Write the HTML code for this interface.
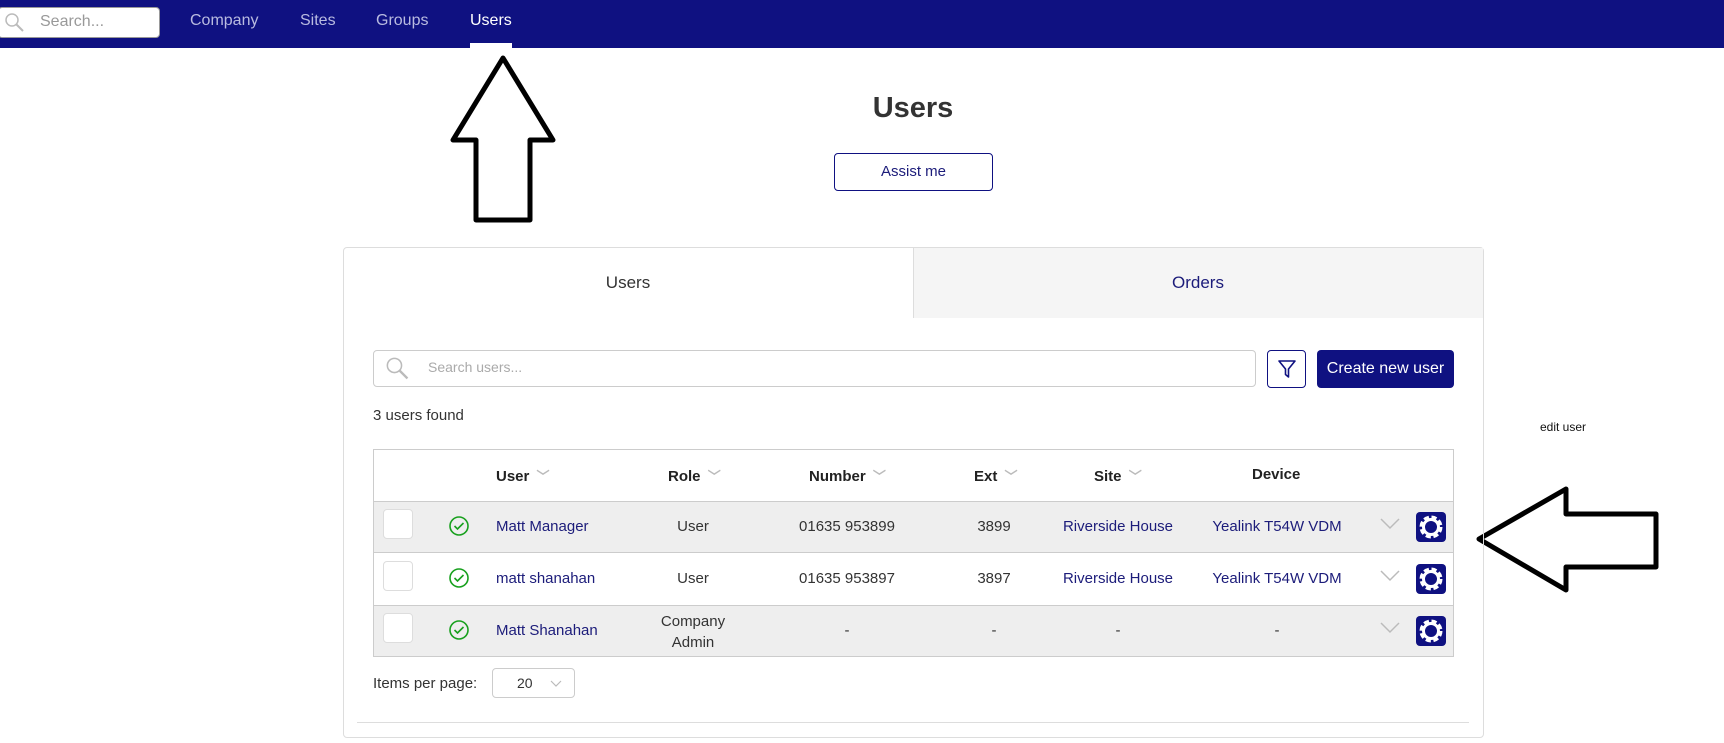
<!DOCTYPE html>
<html><head><meta charset="utf-8"><style>
*{box-sizing:border-box;margin:0;padding:0}
body{width:1724px;height:743px;background:#fff;font-family:"Liberation Sans",sans-serif;position:relative;overflow:hidden;color:#333}
.a{position:absolute}
.nav{left:0;top:0;width:1724px;height:48px;background:#0f1181}
.nl{top:12px;font-size:16px;color:#b9bbe0}
.t{font-size:15px;white-space:nowrap}
.hd{font-weight:bold;font-size:15px;color:#222}
.lk{color:#1c1c7a}
.cb{width:30px;height:30px;background:#fff;border:1px solid #ddd;border-radius:4px}
.chev{color:#bbb;font-size:13px;margin-left:3px}
</style></head><body>
<div class="a nav"></div>
<div class="a" style="left:-2px;top:7px;width:162px;height:31px;background:#fff;border:1px solid #999;border-radius:4px"></div>
<svg class="a" style="left:4px;top:12px" width="22" height="22" viewBox="0 0 22 22"><circle cx="8" cy="8" r="6" fill="none" stroke="#bbb" stroke-width="1.5"/><line x1="12.5" y1="12.5" x2="19" y2="19" stroke="#bbb" stroke-width="2"/></svg>
<div class="a t" style="left:40px;top:13px;font-size:16px;color:#999">Search...</div>
<div class="a nl" style="left:190px">Company</div>
<div class="a nl" style="left:300px">Sites</div>
<div class="a nl" style="left:376px">Groups</div>
<div class="a nl" style="left:470px;color:#fff">Users</div>
<div class="a" style="left:470px;top:43px;width:42px;height:5px;background:#fff"></div>
<svg class="a" style="left:0;top:0" width="1724" height="743"><polygon points="503,58 453,140 476,140 476,220 530,220 530,140 553,140" fill="#fff" stroke="#000" stroke-width="5" stroke-linejoin="round"/><polygon points="1479,539 1566,489 1566,514 1656,514 1656,567 1566,567 1566,590" fill="#fff" stroke="#000" stroke-width="5" stroke-linejoin="round"/></svg>
<div class="a" style="left:0;width:1826px;top:92px;text-align:center;font-size:29px;font-weight:bold;color:#333">Users</div>
<div class="a" style="left:834px;top:153px;width:159px;height:38px;border:1px solid #0f1181;border-radius:4px;text-align:center;line-height:36px;font-size:15px;color:#1c1c7a">Assist me</div>
<div class="a" style="left:343px;top:247px;width:1141px;height:491px;border:1px solid #ddd;border-radius:4px"></div>
<div class="a" style="left:913px;top:248px;width:570px;height:70px;background:#f5f5f5;border-left:1px solid #ddd"></div>
<div class="a t" style="left:343px;width:570px;top:273px;text-align:center;font-size:17px">Users</div>
<div class="a t lk" style="left:913px;width:570px;top:273px;text-align:center;font-size:17px">Orders</div>
<div class="a" style="left:373px;top:350px;width:883px;height:37px;border:1px solid #ccc;border-radius:4px"></div>
<svg class="a" style="left:385px;top:356px" width="26" height="26" viewBox="0 0 22 22"><circle cx="8" cy="8" r="6" fill="none" stroke="#bbb" stroke-width="1.3"/><line x1="12.5" y1="12.5" x2="19" y2="19" stroke="#bbb" stroke-width="2"/></svg>
<div class="a t" style="left:428px;top:359px;font-size:14px;color:#aaa">Search users...</div>
<div class="a" style="left:1267px;top:350px;width:39px;height:38px;border:1px solid #0f1181;border-radius:4px"></div>
<svg class="a" style="left:1276px;top:358px" width="22" height="22" viewBox="0 0 22 22"><path d="M3 3H19L12.5 11V19L9.5 16.5V11Z" fill="none" stroke="#0f1181" stroke-width="1.6" stroke-linejoin="round"/></svg>
<div class="a" style="left:1317px;top:350px;width:137px;height:38px;background:#0f1181;border-radius:4px;color:#fff;text-align:center;line-height:38px;font-size:16px">Create new user</div>
<div class="a t" style="left:373px;top:407px;font-size:15px">3 users found</div>
<div class="a" style="left:373px;top:449px;width:1081px;height:208px;border:1px solid #ccc"></div>
<div class="a" style="left:374px;top:501px;width:1079px;height:52px;background:#eee;border-top:1px solid #ccc;border-bottom:1px solid #ccc"></div>
<div class="a" style="left:374px;top:605px;width:1079px;height:51px;background:#eee;border-top:1px solid #ccc"></div>
<div class="a hd" style="left:496px;top:466px">User <span class="chev">﹀</span></div>
<div class="a hd" style="left:668px;top:466px">Role <span class="chev">﹀</span></div>
<div class="a hd" style="left:809px;top:466px">Number <span class="chev">﹀</span></div>
<div class="a hd" style="left:974px;top:466px">Ext <span class="chev">﹀</span></div>
<div class="a hd" style="left:1094px;top:466px">Site <span class="chev">﹀</span></div>
<div class="a hd" style="left:1252px;top:466px">Device</div>

<div class="a cb" style="left:383px;top:509px"></div>
<div class="a cb" style="left:383px;top:561px"></div>
<div class="a cb" style="left:383px;top:613px"></div>
<svg class="a" style="left:448px;top:515px" width="22" height="130"><g fill="none" stroke="#18a01e" stroke-width="1.6"><circle cx="11" cy="11" r="9"/><path d="M6.5 11l3 3 6-6"/><circle cx="11" cy="63" r="9"/><path d="M6.5 63l3 3 6-6"/><circle cx="11" cy="115" r="9"/><path d="M6.5 115l3 3 6-6"/></g></svg>
<div class="a t lk" style="left:496px;top:518px">Matt Manager</div>
<div class="a t lk" style="left:496px;top:570px">matt shanahan</div>
<div class="a t lk" style="left:496px;top:622px">Matt Shanahan</div>
<div class="a t" style="left:643px;width:100px;text-align:center;top:518px">User</div>
<div class="a t" style="left:643px;width:100px;text-align:center;top:570px">User</div>
<div class="a t" style="left:643px;width:100px;text-align:center;top:611px;line-height:21px">Company<br>Admin</div>
<div class="a t" style="left:777px;width:140px;text-align:center;top:518px">01635 953899</div>
<div class="a t" style="left:777px;width:140px;text-align:center;top:570px">01635 953897</div>
<div class="a t" style="left:777px;width:140px;text-align:center;top:622px">-</div>
<div class="a t" style="left:954px;width:80px;text-align:center;top:518px">3899</div>
<div class="a t" style="left:954px;width:80px;text-align:center;top:570px">3897</div>
<div class="a t" style="left:954px;width:80px;text-align:center;top:622px">-</div>
<div class="a t lk" style="left:1048px;width:140px;text-align:center;top:518px">Riverside House</div>
<div class="a t lk" style="left:1048px;width:140px;text-align:center;top:570px">Riverside House</div>
<div class="a t" style="left:1048px;width:140px;text-align:center;top:622px">-</div>
<div class="a t lk" style="left:1197px;width:160px;text-align:center;top:518px">Yealink T54W VDM</div>
<div class="a t lk" style="left:1197px;width:160px;text-align:center;top:570px">Yealink T54W VDM</div>
<div class="a t" style="left:1197px;width:160px;text-align:center;top:622px">-</div>
<svg class="a" style="left:1380px;top:518px" width="20" height="120"><g fill="none" stroke="#bbb" stroke-width="1.5"><path d="M1 1l9 9 9-9"/><path d="M1 53l9 9 9-9"/><path d="M1 105l9 9 9-9"/></g></svg>
<svg class="a" style="left:1416px;top:512px" width="30" height="134">
<defs><g id="g"><rect width="30" height="30" rx="4" fill="#0f1181"/><circle cx="15" cy="15" r="9" fill="none" stroke="#fff" stroke-width="5" stroke-dasharray="4.7 2.4"/><circle cx="15" cy="15" r="7.5" fill="none" stroke="#fff" stroke-width="3"/></g></defs>
<use href="#g"/><use href="#g" y="52"/><use href="#g" y="104"/></svg>
<div class="a t" style="left:373px;top:675px;font-size:15px">Items per page:</div>
<div class="a" style="left:492px;top:668px;width:83px;height:30px;border:1px solid #ccc;border-radius:4px"></div>
<div class="a t" style="left:517px;top:675px;font-size:14px">20</div>
<svg class="a" style="left:550px;top:680px" width="12" height="8"><path d="M1 1l5 5 5-5" fill="none" stroke="#bbb" stroke-width="1.2"/></svg>
<div class="a" style="left:357px;top:722px;width:1112px;height:1px;background:#ddd"></div>
<div class="a" style="left:1540px;top:420px;font-size:12px;color:#111">edit user</div>
</body></html>
